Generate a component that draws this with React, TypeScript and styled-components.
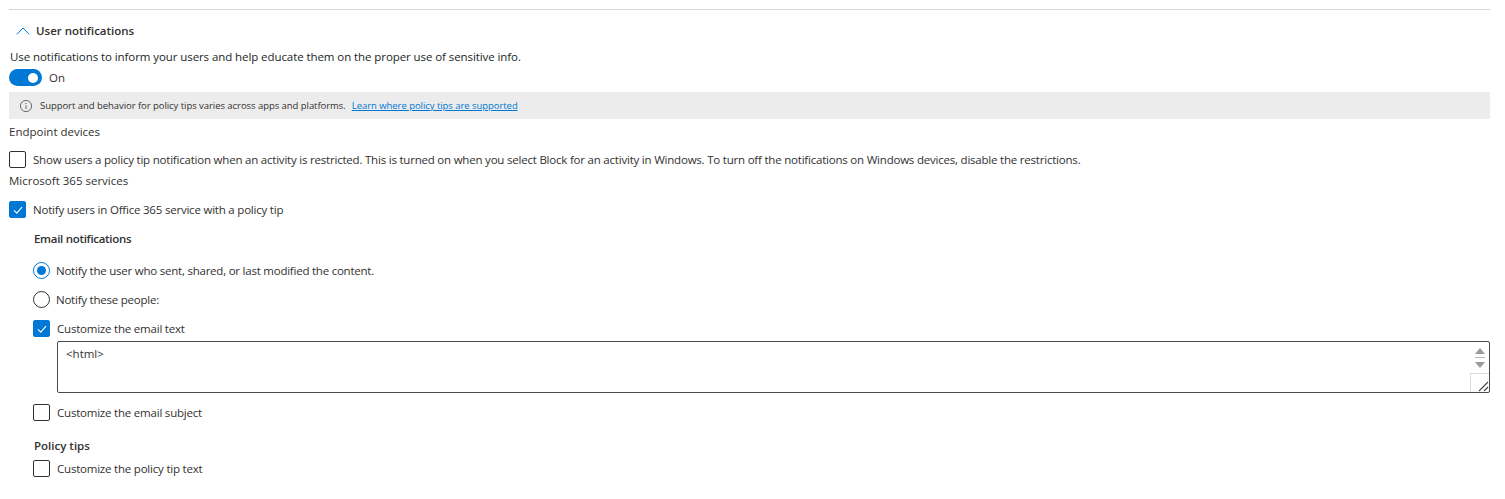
import styled, { createGlobalStyle } from 'styled-components'

const GlobalStyle = createGlobalStyle`
  html, body {
    margin: 0;
    background: #fff;
  }
  body {
    font-family: "Open Sans", "Noto Sans", "Liberation Sans", sans-serif;
    font-size: 11.5px;
    color: #323130;
  }
`

const Check = () => (
  <svg width="12" height="12" viewBox="0 0 12 12" fill="none">
    <path d="M2 6.4 L4.8 9.2 L10 3.2" stroke="#fff" strokeWidth="1.1" />
  </svg>
)

const Box = ({ checked }: { checked?: boolean }) => <CheckBox $checked={checked}>{checked && <Check />}</CheckBox>

const App = () => {
  return (
    <Page>
      <GlobalStyle />
      <Header>
        <svg width="14" height="8" viewBox="0 0 14 8" fill="none">
          <path d="M0.8 7.4 L7 1 L13.2 7.4" stroke="#0078d4" strokeWidth="1" />
        </svg>
        <HeaderTitle>User notifications</HeaderTitle>
      </Header>
      <Description>Use notifications to inform your users and help educate them on the proper use of sensitive info.</Description>
      <ToggleRow>
        <Toggle>
          <Knob />
        </Toggle>
        <span>On</span>
      </ToggleRow>
      <Banner>
        <svg width="14" height="14" viewBox="0 0 14 14" fill="none">
          <circle cx="7" cy="7" r="5.6" stroke="#605e5c" strokeWidth="0.9" />
          <path d="M7 6.2 V10" stroke="#605e5c" strokeWidth="0.9" />
          <circle cx="7" cy="4.4" r="0.6" fill="#605e5c" />
        </svg>
        <BannerText>Support and behavior for policy tips varies across apps and platforms.</BannerText>
        <BannerLink href="#">Learn where policy tips are supported</BannerLink>
      </Banner>
      <SectionLabel>Endpoint devices</SectionLabel>
      <OptionRow $top={6}>
        <Box />
        <span>
          Show users a policy tip notification when an activity is restricted. This is turned on when you select Block for an
          activity in Windows. To turn off the notifications on Windows devices, disable the restrictions.
        </span>
      </OptionRow>
      <SectionLabel $compact>Microsoft 365 services</SectionLabel>
      <OptionRow $top={7}>
        <Box checked />
        <span>Notify users in Office 365 service with a policy tip</span>
      </OptionRow>
      <Nested>
        <GroupTitle>Email notifications</GroupTitle>
        <RadioRow>
          <Radio $selected />
          <span>Notify the user who sent, shared, or last modified the content.</span>
        </RadioRow>
        <RadioRow>
          <Radio />
          <span>Notify these people:</span>
        </RadioRow>
        <OptionRow>
          <Box checked />
          <span>Customize the email text</span>
        </OptionRow>
        <EditorWrap>
          <Editor>
            <EditorText>&lt;html&gt;</EditorText>
            <Scrollbar>
              <ScrollArrows>
                <svg width="10" height="24" viewBox="0 0 10 24">
                  <path d="M5 0 L10 6 H0 Z" fill="#9a9a9a" />
                  <rect x="0" y="9" width="10" height="1" fill="#b5b5b5" />
                  <path d="M0 14 H10 L5 20 Z" fill="#9a9a9a" />
                </svg>
              </ScrollArrows>
              <Resizer>
                <svg width="12" height="12" viewBox="0 0 12 12" fill="none">
                  <path d="M2 11 L11 2 M7 11 L11 7" stroke="#444" strokeWidth="1.1" />
                </svg>
              </Resizer>
            </Scrollbar>
          </Editor>
        </EditorWrap>
        <OptionRow $top={5}>
          <Box />
          <span>Customize the email subject</span>
        </OptionRow>
        <GroupTitle $short>Policy tips</GroupTitle>
        <OptionRow>
          <Box />
          <span>Customize the policy tip text</span>
        </OptionRow>
      </Nested>
    </Page>
  )
}

export default App

const Page = styled.div`
  width: 1481px;
  height: 490px;
  margin-left: 9px;
  border-top: 1px solid #d6d6d6;
  margin-top: 9px;
  box-sizing: border-box;
  overflow: hidden;
`

const Header = styled.div`
  display: flex;
  align-items: center;
  gap: 6px;
  height: 41px;
  padding-left: 7px;
`

const HeaderTitle = styled.span`
  font-weight: 600;
`

const Description = styled.div`
  height: 14px;
  line-height: 14px;
  margin-top: -1px;
  padding-left: 1px;
  letter-spacing: -0.08px;
  color: #201f1e;
`

const ToggleRow = styled.div`
  display: flex;
  align-items: center;
  gap: 7px;
  height: 17px;
  margin-top: 5px;
`

const Toggle = styled.div`
  display: flex;
  align-items: center;
  justify-content: flex-end;
  width: 33px;
  height: 17px;
  padding-right: 4px;
  box-sizing: border-box;
  border-radius: 9px;
  background: #0078d4;
`

const Knob = styled.div`
  width: 10px;
  height: 10px;
  border-radius: 50%;
  background: #fff;
`

const Banner = styled.div`
  display: flex;
  align-items: center;
  height: 27px;
  margin-top: 6px;
  padding-left: 10px;
  background: #ececec;
  font-size: 9.5px;
  letter-spacing: -0.05px;
`

const BannerText = styled.span`
  margin-left: 7px;
`

const BannerLink = styled.a`
  margin-left: 6px;
  color: #0078d4;
`

const SectionLabel = styled.div<{ $compact?: boolean }>`
  height: 14px;
  line-height: 14px;
  margin-top: ${p => (p.$compact ? 0 : 6)}px;
`

const OptionRow = styled.div<{ $top?: number }>`
  display: flex;
  align-items: center;
  gap: 7px;
  height: 29px;
  margin-top: ${p => p.$top ?? 0}px;
  letter-spacing: -0.21px;
`

const CheckBox = styled.div<{ $checked?: boolean }>`
  display: flex;
  align-items: center;
  justify-content: center;
  flex: none;
  width: 17px;
  height: 17px;
  box-sizing: border-box;
  border-radius: 2px;
  border: 1px solid ${p => (p.$checked ? '#0078d4' : '#323130')};
  background: ${p => (p.$checked ? '#0078d4' : '#fff')};
`

const Nested = styled.div`
  padding-left: 24px;
`

const GroupTitle = styled.div<{ $short?: boolean }>`
  display: flex;
  align-items: center;
  height: ${p => (p.$short ? 18 : 29)}px;
  font-weight: 600;
  padding-left: 1px;
  margin-top: ${p => (p.$short ? 9 : 0)}px;
  margin-bottom: ${p => (p.$short ? 0 : 3)}px;
  letter-spacing: ${p => (p.$short ? 0 : -0.3)}px;
`

const RadioRow = styled.div`
  display: flex;
  align-items: center;
  gap: 6px;
  height: 29px;
  letter-spacing: -0.23px;
`

const Radio = styled.div<{ $selected?: boolean }>`
  position: relative;
  flex: none;
  width: 17px;
  height: 17px;
  box-sizing: border-box;
  border-radius: 50%;
  border: 1px solid ${p => (p.$selected ? '#0078d4' : '#323130')};
  &::after {
    content: '';
    display: ${p => (p.$selected ? 'block' : 'none')};
    position: absolute;
    inset: 3px;
    border-radius: 50%;
    background: #0078d4;
  }
`

const EditorWrap = styled.div`
  padding-left: 24px;
  margin-top: -2px;
`

const Editor = styled.div`
  display: flex;
  justify-content: space-between;
  height: 52px;
  box-sizing: border-box;
  border: 1px solid #4a4a4a;
  border-radius: 2px;
`

const EditorText = styled.div`
  padding: 4px 8px;
`

const Scrollbar = styled.div`
  display: flex;
  flex-direction: column;
  width: 19px;
`

const ScrollArrows = styled.div`
  display: flex;
  justify-content: center;
  flex: 1;
  padding-top: 6px;
`

const Resizer = styled.div`
  display: flex;
  align-items: flex-end;
  justify-content: flex-end;
  height: 19px;
  box-sizing: border-box;
  border-top: 1px solid #dcdcdc;
  border-left: 1px solid #dcdcdc;
`
